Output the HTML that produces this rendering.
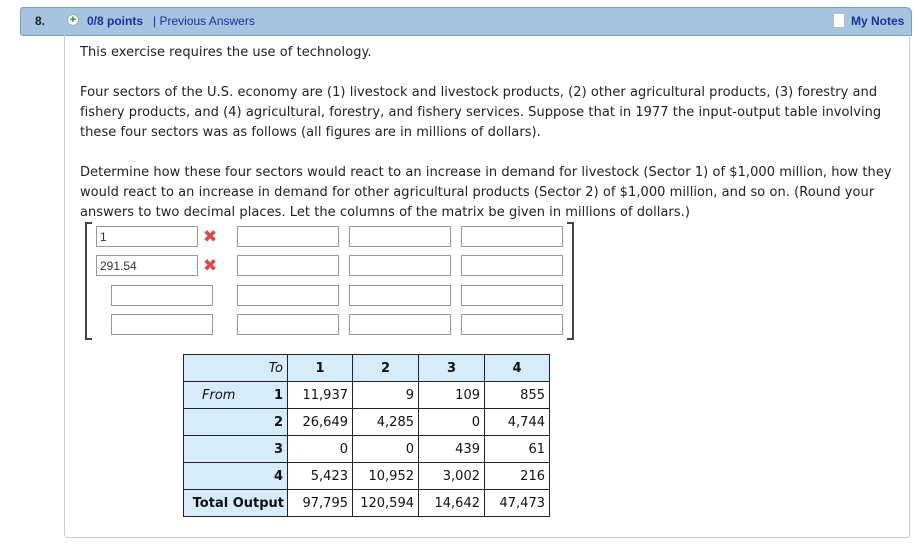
<!DOCTYPE html>
<html><head><meta charset="utf-8"><style>
body{margin:0;width:919px;height:548px;background:#fff;position:relative;overflow:hidden;font-family:Verdana,"DejaVu Sans",sans-serif;}
.hdr{position:absolute;left:20px;top:7px;width:890px;height:27px;background:#a6c3df;border:1px solid #7f9cb8;border-radius:3px 6px 0 3px;font-family:"Liberation Sans",Arial,sans-serif;font-size:12px;}
.box{position:absolute;left:64px;top:35px;width:844px;height:502px;border:1px solid #ccc;border-top:none;border-radius:0 0 4px 4px;}
.t{position:absolute;left:80px;font-size:13px;color:#222;line-height:20px;width:830px;letter-spacing:0.05px;}
input{position:absolute;width:102px;height:21px;border:1px solid #999;box-sizing:border-box;font-family:"Liberation Sans",Arial,sans-serif;font-size:12px;padding:1px 3px;color:#333;}
.x{position:absolute;color:#e04848;font-size:17px;font-weight:bold;font-family:"DejaVu Sans",sans-serif;line-height:16px;}
table{position:absolute;left:183px;top:354px;border-collapse:collapse;font-size:13px;color:#111;}
td{border:1px solid #222;height:26px;padding:0 4px;text-align:right;}
td.b{background:#d6ecfa;}
</style></head><body>
<div class="hdr">
<span style="position:absolute;left:14px;top:6px;font-weight:bold;color:#222">8.</span>
<span style="position:absolute;left:46px;top:6px;width:12px;height:12px;border-radius:50%;background:#fff;border:1px solid #9ab;box-sizing:border-box;color:#1a8a1a;font-weight:bold;font-size:11px;line-height:10px;text-align:center">+</span>
<span style="position:absolute;left:66px;top:6px;color:#1a2fa0;font-weight:bold">0/8 points</span>
<span style="position:absolute;left:132px;top:6px;color:#1a2fa0">| Previous Answers</span>
<span style="position:absolute;left:812px;top:5px;width:12px;height:15px;background:#fff;border:1px solid #bbb;box-sizing:border-box"></span>
<span style="position:absolute;left:830px;top:6px;color:#1a2fa0;font-weight:bold">My Notes</span>
</div>
<div class="box"></div>
<div class="t" style="top:43px">This exercise requires the use of technology.</div>
<div class="t" style="top:83px">Four sectors of the U.S. economy are (1) livestock and livestock products, (2) other agricultural products, (3) forestry and fishery products, and (4) agricultural, forestry, and fishery services. Suppose that in 1977 the input-output table involving these four sectors was as follows (all figures are in millions of dollars).</div>
<div class="t" style="top:163px">Determine how these four sectors would react to an increase in demand for livestock (Sector 1) of $1,000 million, how they would react to an increase in demand for other agricultural products (Sector 2) of $1,000 million, and so on. (Round your answers to two decimal places. Let the columns of the matrix be given in millions of dollars.)</div>
<div style="position:absolute;left:85px;top:222px;width:5px;height:114px;border:2px solid #444;border-right:none"></div>
<div style="position:absolute;left:567px;top:222px;width:5px;height:114px;border:2px solid #444;border-left:none"></div>
<input style="left:96px;top:226px" value="1"><span class="x" style="left:203px;top:229px">✖</span>
<input style="left:96px;top:255px" value="291.54"><span class="x" style="left:203px;top:258px">✖</span>
<input style="left:111px;top:285px"><input style="left:111px;top:314px">
<input style="left:237px;top:226px"><input style="left:349px;top:226px"><input style="left:461px;top:226px">
<input style="left:237px;top:255px"><input style="left:349px;top:255px"><input style="left:461px;top:255px">
<input style="left:237px;top:285px"><input style="left:349px;top:285px"><input style="left:461px;top:285px">
<input style="left:237px;top:314px"><input style="left:349px;top:314px"><input style="left:461px;top:314px">
<table>
<tr><td class="b" style="width:95px"><i>To</i></td><td class="b" style="width:56px;text-align:center"><b>1</b></td><td class="b" style="width:57px;text-align:center"><b>2</b></td><td class="b" style="width:57px;text-align:center"><b>3</b></td><td class="b" style="width:56px;text-align:center"><b>4</b></td></tr>
<tr><td class="b"><i style="float:left;padding-left:14px">From</i><b>1</b></td><td>11,937</td><td>9</td><td>109</td><td>855</td></tr>
<tr><td class="b"><b>2</b></td><td>26,649</td><td>4,285</td><td>0</td><td>4,744</td></tr>
<tr><td class="b"><b>3</b></td><td>0</td><td>0</td><td>439</td><td>61</td></tr>
<tr><td class="b"><b>4</b></td><td>5,423</td><td>10,952</td><td>3,002</td><td>216</td></tr>
<tr><td class="b" style="padding:0 3px"><b>Total Output</b></td><td>97,795</td><td>120,594</td><td>14,642</td><td>47,473</td></tr>
</table>
</body></html>
